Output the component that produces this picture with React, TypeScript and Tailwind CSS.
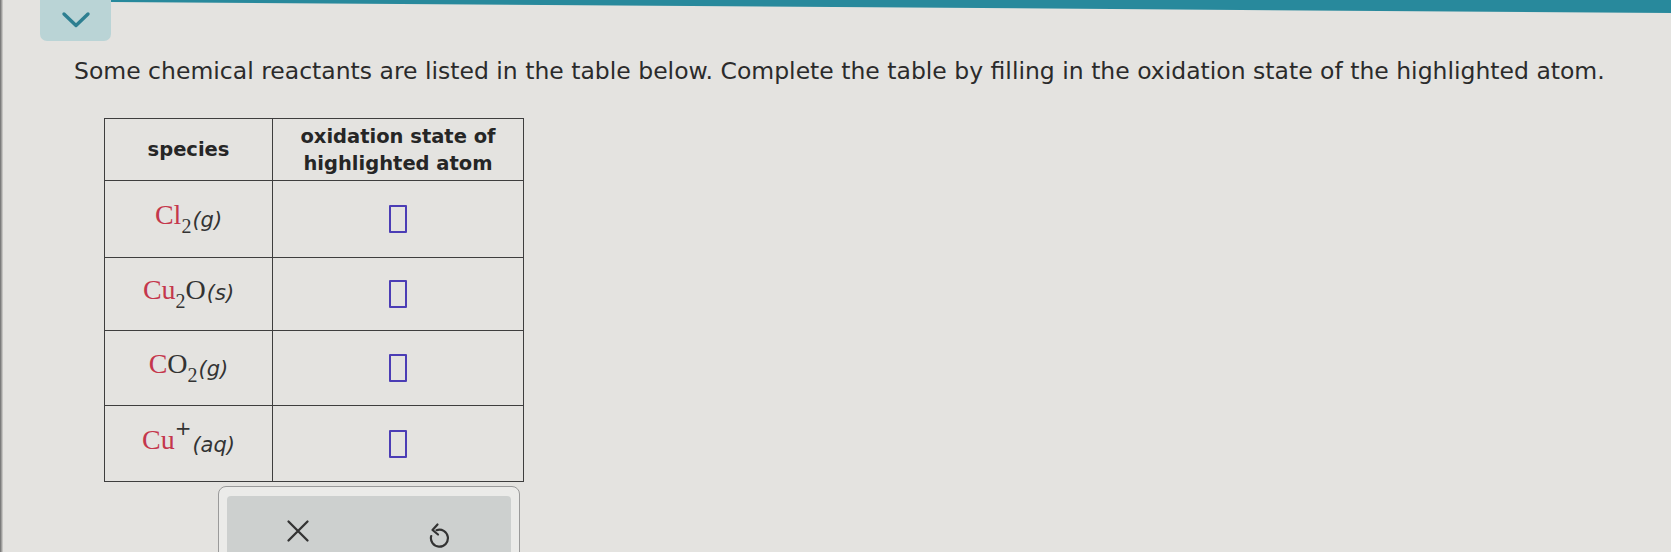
import React from "react";

const sans = { fontFamily: '"DejaVu Sans", Verdana, sans-serif' };

function Box() {
  return <div className="w-[18px] h-[28px] border-2 border-[#4b3db5] rounded-[1px]" />;
}

function Species({ children }: { children: React.ReactNode }) {
  return (
    <div className="flex items-baseline justify-center text-[#2f2f2f]" style={{ fontFamily: '"Liberation Serif", serif' }}>
      {children}
    </div>
  );
}

const Red = ({ t }: { t: string }) => <span className="text-[28px] text-[#c4374c]">{t}</span>;
const Dark = ({ t }: { t: string }) => <span className="text-[28px] text-[#333]">{t}</span>;
const Sub = ({ t }: { t: string }) => <span className="text-[20px] relative top-[9px] text-[#333]">{t}</span>;
const State = ({ t, low }: { t: string; low?: boolean }) => (
  <span className={`text-[21px] italic text-[#333] relative ${low ? "top-[3px]" : "top-[1px]"} ml-[1px]`} style={sans}>
    {t}
  </span>
);

export default function App() {
  const rows: React.ReactNode[] = [
    <Species key="a">
      <Red t="Cl" />
      <Sub t="2" />
      <State t="(g)" low />
    </Species>,
    <Species key="b">
      <Red t="Cu" />
      <Sub t="2" />
      <Dark t="O" />
      <State t="(s)" />
    </Species>,
    <Species key="c">
      <Red t="C" />
      <Dark t="O" />
      <Sub t="2" />
      <State t="(g)" low />
    </Species>,
    <Species key="d">
      <Red t="Cu" />
      <span className="text-[20px] relative -top-[14px] text-[#333]" style={sans}>+</span>
      <State t="(aq)" low />
    </Species>,
  ];
  const heights = ["h-[77px]", "h-[73px]", "h-[75px]", "h-[75px]"];
  return (
    <div className="w-full h-[552px] overflow-hidden bg-[#e4e3e0] relative flex flex-col" style={sans}>
      <div className="absolute left-0 top-0 bottom-0 w-[3px] bg-gradient-to-r from-[#6b6b6b] to-[#d8d7d4]" />
      <div className="flex items-start h-[42px] shrink-0">
        <div className="w-[40px] shrink-0" />
        <div className="w-[71px] h-[41px] shrink-0 bg-[#bad4d6] rounded-b-[7px] flex items-center justify-center pb-[1px]">
          <svg width="30" height="18" viewBox="0 0 30 18">
            <path d="M3 3 L15 14.5 L27 3" fill="none" stroke="#2d7f91" strokeWidth="3.4" strokeLinecap="round" strokeLinejoin="round" />
          </svg>
        </div>
        <div className="flex-1 h-[13px] bg-[#28899c] [clip-path:polygon(0_0,100%_0,100%_100%,0_15%)]" />
      </div>
      <div className="pl-[74px] pt-[14px] text-[23.5px] leading-[30px] text-[#2b2b2b] whitespace-nowrap">
        Some chemical reactants are listed in the table below. Complete the table by filling in the oxidation state of the highlighted atom.
      </div>
      <div className="pl-[104px] pt-[32px] flex flex-col">
        <div className="w-[420px] border-[1.5px] border-[#3e3e3e] flex flex-col">
          <div className="flex h-[62px] border-b-[1.5px] border-[#3e3e3e]">
            <div className="w-[168px] border-r-[1.5px] border-[#3e3e3e] flex items-center justify-center text-[19.5px] font-bold text-[#262626]">
              species
            </div>
            <div className="flex-1 flex items-center justify-center text-center text-[19.5px] leading-[27px] font-bold text-[#262626]">
              oxidation state of
              <br />
              highlighted atom
            </div>
          </div>
          {rows.map((r, i) => (
            <div key={i} className={`flex ${heights[i]} ${i < 3 ? "border-b-[1.5px] border-[#3e3e3e]" : ""}`}>
              <div className="w-[168px] border-r-[1.5px] border-[#3e3e3e] flex items-center justify-center pb-[8px]">{r}</div>
              <div className="flex-1 flex items-center justify-center">
                <Box />
              </div>
            </div>
          ))}
        </div>
        <div className="ml-[114px] mt-[4px] w-[302px] h-[80px] border-[1.5px] border-[#9a9a9a] rounded-[8px] bg-[#ebebe9] pt-[9px] px-[8px]">
          <div className="h-full bg-[#cdd0cf] rounded-[4px] flex">
            <div className="w-[142px] flex justify-center pt-[23px]">
              <svg width="24" height="24" viewBox="0 0 24 24">
                <path d="M2.5 2.5 L21.5 21.5 M21.5 2.5 L2.5 21.5" stroke="#333" strokeWidth="2.3" strokeLinecap="round" />
              </svg>
            </div>
            <div className="flex-1 flex justify-center pt-[24px]">
              <svg width="22" height="28" viewBox="0 0 22 28">
                <path d="M7.5 10.2 A8.5 8.5 0 1 1 2.2 16" fill="none" stroke="#333" strokeWidth="2.2" strokeLinecap="round" />
                <path d="M8.5 4.5 L3.5 10 L9 14.5" fill="none" stroke="#333" strokeWidth="2.2" strokeLinecap="round" strokeLinejoin="round" />
              </svg>
            </div>
          </div>
        </div>
      </div>
    </div>
  );
}
